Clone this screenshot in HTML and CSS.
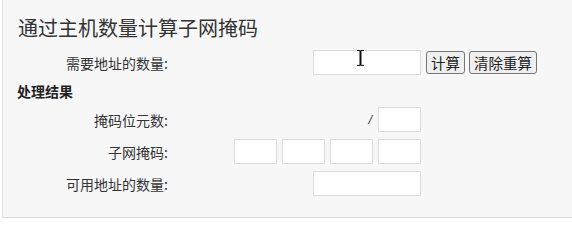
FILE: index.html
```html
<!DOCTYPE html>
<html lang="zh-CN">
<head>
<meta charset="utf-8">
<title>通过主机数量计算子网掩码</title>
<link rel="stylesheet" href="styles.css">
</head>
<body>
<div class="panel">
  <h2 class="title">通过主机数量计算子网掩码</h2>
  <div class="form">
    <label class="label">需要地址的数量:</label>
    <div class="value"><input class="field wide" type="text"></div>
    <div class="actions">
      <button class="btn" type="button">计算</button>
      <button class="btn" type="button">清除重算</button>
    </div>

    <div class="section">处理结果</div>

    <label class="label">掩码位元数:</label>
    <div class="value"><span class="slash">/</span><input class="field small" type="text"></div>
    <div></div>

    <label class="label">子网掩码:</label>
    <div class="value">
      <input class="field small" type="text">
      <input class="field small" type="text">
      <input class="field small" type="text">
      <input class="field small" type="text">
    </div>
    <div></div>

    <label class="label">可用地址的数量:</label>
    <div class="value"><input class="field wide" type="text"></div>
    <div></div>
  </div>
  <svg class="cursor" width="9" height="16" viewBox="0 0 9 16" aria-hidden="true">
    <path d="M1 0.5h3v14.9H1M8 0.5H5v14.9h3M4.5 0.5v15" fill="none" stroke="#111" stroke-width="1"/>
  </svg>
</div>
</body>
</html>
```

FILE: styles.css
```css
html, body {
  margin: 0;
  padding: 0;
  background: #ffffff;
}

body {
  font-family: "Noto Sans CJK SC", "Noto Sans", "Liberation Sans", sans-serif;
  color: #333;
}

.panel {
  position: relative;
  margin-left: 2px;
  height: 218px;
  box-sizing: border-box;
  background: #f7f7f8;
  border-left: 1px solid #e2e2e2;
  border-bottom: 1px solid #d9d9d9;
  padding-top: 14px;
}

.title {
  margin: 0 0 0 15px;
  font-size: 20px;
  font-weight: normal;
  line-height: 28px;
  color: #333;
}

.form {
  display: grid;
  grid-template-columns: 165px 253px auto;
  grid-template-rows: 25px 18px 25px 25px 25px;
  row-gap: 7px;
  margin-top: 8px;
  align-items: center;
}

.label {
  font-size: 14px;
  line-height: 18px;
  text-align: right;
  color: #333;
}

.value {
  display: flex;
  justify-content: flex-end;
  align-items: center;
  gap: 5px;
}

.actions {
  display: flex;
  gap: 4px;
  margin-left: 5px;
  align-items: center;
}

.section {
  grid-column: 1 / -1;
  margin-left: 14px;
  font-size: 14px;
  font-weight: bold;
  line-height: 18px;
  color: #222;
}

.field {
  box-sizing: border-box;
  height: 25px;
  margin: 0;
  padding: 0 4px;
  border: 1px solid #dcdcdc;
  background: #fff;
  outline: none;
}

.field.wide {
  width: 108px;
}

.field.small {
  width: 43px;
}

.slash {
  font-family: "Liberation Sans", sans-serif;
  font-size: 13px;
  font-style: italic;
  color: #444;
  margin-right: 1px;
}

.btn {
  box-sizing: border-box;
  height: 23px;
  margin: 0;
  padding: 0 4px;
  font-family: "Noto Sans CJK SC", sans-serif;
  font-size: 14.5px;
  line-height: 20px;
  color: #222;
  background: #efefef;
  border: 1px solid #767676;
  border-radius: 3px;
}

.cursor {
  position: absolute;
  left: 353px;
  top: 50px;
}
```
